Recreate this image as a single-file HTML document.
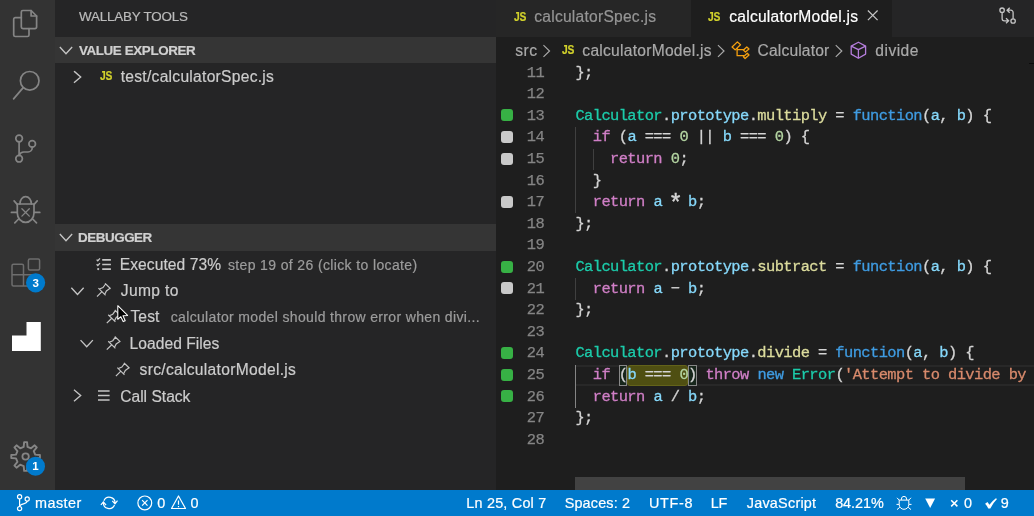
<!DOCTYPE html>
<html><head><meta charset="utf-8">
<style>
html,body{margin:0;padding:0;}
body{width:1034px;height:516px;overflow:hidden;background:#1e1e1e;position:relative;font-family:"Liberation Sans",sans-serif;color:#ccc;}
.abs{position:absolute;}
#act{left:0;top:0;width:55px;height:490px;background:#333333;}
#side{left:55px;top:0;width:441px;height:490px;background:#252526;}
#status{left:0;top:489.6px;width:1034px;height:26.4px;background:#007acc;color:#fff;}
.hdr{position:absolute;left:55px;width:441px;background:#353535;}
.t{position:absolute;white-space:nowrap;line-height:20px;height:20px;-webkit-text-stroke:0.2px currentColor;}
.ui{font-size:15.6px;color:#cccccc;}
.desc{font-size:14px;color:#9a9a9a;}
.sb{font-size:15.6px;color:#fff;}
svg{position:absolute;overflow:visible;}
.code{font-family:"Liberation Mono",monospace;font-size:15.4px;letter-spacing:-0.573px;color:#d4d4d4;white-space:pre;position:absolute;left:575.4px;-webkit-text-stroke:0.3px currentColor;height:21.6px;line-height:21.6px;}
.ln{font-family:"Liberation Mono",monospace;font-size:15.4px;letter-spacing:-0.573px;color:#858585;position:absolute;left:526.8px;-webkit-text-stroke:0.25px currentColor;height:21.6px;line-height:21.6px;}
.lna{color:#c6c6c6;}
.g{position:absolute;left:500.5px;width:12px;height:12px;border-radius:3px;}
.gg{background:#37b145;}
.gw{background:#c9c9c9;}
.k{color:#d07fc6}.b{color:#3f9ce2}.c{color:#1ccbaa}.v{color:#86d8fa}.f{color:#dcdc9d}.n{color:#b5d6a3}.s{color:#d88a6c}
.ig{position:absolute;width:1px;background:#404040;}
.bd{position:absolute;width:20px;height:20px;line-height:20px;text-align:center;color:#fff;font-weight:700;font-size:11.5px;}
.js{position:absolute;font-weight:700;font-size:12.4px;line-height:20px;height:20px;color:#d2d22c;transform:scaleX(0.83);transform-origin:0 0;letter-spacing:-0.2px;-webkit-text-stroke:0.2px currentColor;}
#root{position:absolute;left:0;top:0;width:1034px;height:516px;will-change:transform;}
.ast{display:inline-block;transform:translateY(3.4px) scale(1.55);transform-origin:50% 50%;}

</style></head><body>
<div id="root">
<div id="act" class="abs">
<svg width="55" height="490" viewBox="0 0 55 490" style="left:0;top:0" fill="none" stroke="#858585" stroke-width="1.7" stroke-linejoin="round" stroke-linecap="round">
<path d="M22.9 10.5h8.2l5.5 5.5v11a1.6 1.6 0 0 1-1.6 1.6h-12.1a1.6 1.6 0 0 1-1.6-1.6v-14.9a1.6 1.6 0 0 1 1.6-1.6z"/>
<path d="M31.1 10.5v5.5h5.5"/>
<path d="M21.3 17.7h-6a1.6 1.6 0 0 0-1.6 1.6v15.6a1.6 1.6 0 0 0 1.6 1.6h12.1a1.6 1.6 0 0 0 1.6-1.6v-6.3"/>
<circle cx="29.7" cy="80.8" r="9.3"/><path d="M23.2 87.6L13.6 98.9"/>
<circle cx="19.1" cy="138.5" r="3.3"/><circle cx="32.2" cy="143.9" r="3.3"/><circle cx="19.1" cy="158.7" r="3.3"/>
<path d="M19.1 141.8V155.4"/><path d="M32.2 147.2v0.6a4.2 4.2 0 0 1-4.2 4.2h-3.9a5 5 0 0 0-4.9 3.2"/>
<path d="M17.3 204h16.7v9a8.35 9.4 0 0 1-16.7 0z"/><path d="M19.9 204a5.75 7.3 0 0 1 11.5 0"/>
<path d="M14.1 200.9L17.4 204.6M37.2 200.9L33.9 204.6M11.4 212.4H17M39.8 212.4H34.3M14.8 222.8L18.6 219M36.5 222.8L32.7 219"/>
<path d="M21.9 208.7L29.3 216.1M29.3 208.7L21.9 216.1" stroke-width="1.3"/>
</svg>
<svg width="55" height="490" viewBox="0 0 55 490" style="left:0;top:0" fill="none" stroke="#6e6e6e" stroke-width="1.5" stroke-linejoin="round">
<path d="M13.5 264.3h8.5a1.5 1.5 0 0 1 1.5 1.5v9h9.5a1.5 1.5 0 0 1 1.5 1.5v8.2a1.5 1.5 0 0 1-1.5 1.5h-19.5a1.5 1.5 0 0 1-1.5-1.5v-18.7a1.5 1.5 0 0 1 1.5-1.5z"/>
<path d="M12 274.8h11.5v11.2"/>
<rect x="28.4" y="259" width="11.2" height="11" rx="1.5"/>
</svg>
<svg width="55" height="490" viewBox="0 0 55 490" style="left:0;top:0">
<path d="M26.5 322H40.8V351H12V335.6H26.5z" fill="#ffffff"/>
<path d="M23.69 446.89 L24.13 442.17 L27.07 442.17 L27.51 446.89 L31.04 448.35 L34.69 445.33 L36.77 447.41 L33.75 451.06 L35.21 454.59 L39.93 455.03 L39.93 457.97 L35.21 458.41 L33.75 461.94 L36.77 465.59 L34.69 467.67 L31.04 464.65 L27.51 466.11 L27.07 470.83 L24.13 470.83 L23.69 466.11 L20.16 464.65 L16.51 467.67 L14.43 465.59 L17.45 461.94 L15.99 458.41 L11.27 457.97 L11.27 455.03 L15.99 454.59 L17.45 451.06 L14.43 447.41 L16.51 445.33 L20.16 448.35Z" fill="none" stroke="#858585" stroke-width="1.9" stroke-linejoin="round"/>
<circle cx="25.6" cy="456.5" r="3.2" fill="none" stroke="#858585" stroke-width="1.8"/>
<circle cx="35.6" cy="282.8" r="9.6" fill="#007acc"/><circle cx="35.5" cy="466.3" r="9.5" fill="#007acc"/>
</svg>
<div class="bd" style="left:25.6px;top:272.8px;">3</div><div class="bd" style="left:25.5px;top:456.3px;">1</div>
</div>
<div id="side" class="abs"></div>
<div class="hdr" style="top:37.3px;height:26.2px;"></div>
<div class="hdr" style="top:224.3px;height:26.4px;"></div>
<svg width="441" height="490" viewBox="55 0 441 490" style="left:55px;top:0" fill="none" stroke="#c5c5c5" stroke-width="1.35" stroke-linecap="square">
<path d="M60.3 47.5l5.70 6.20l5.70 -6.20"/>
<path d="M60.3 234.5l5.70 6.20l5.70 -6.20"/>
<path d="M74.5 71.6l6.20 5.30l-6.20 5.30"/>
<path d="M71.8 288.2l5.70 6.20l5.70 -6.20"/>
<path d="M81.0 340.6l5.70 6.20l5.70 -6.20"/>
<path d="M74.5 390.2l6.20 5.30l-6.20 5.30"/>
<path transform="translate(93.45,279.20) scale(0.9)" stroke-width="1.3" d="M4.4 18.8L8.9 14.4M6 10.4L13 17.4M7.4 10.7L10.6 9.3L13.5 5.3M18.4 10.2L14.4 13L12.8 16.1M13.3 5.1L18.6 10.2"/>
<path transform="translate(103.25,305.80) scale(0.9)" stroke-width="1.3" d="M4.4 18.8L8.9 14.4M6 10.4L13 17.4M7.4 10.7L10.6 9.3L13.5 5.3M18.4 10.2L14.4 13L12.8 16.1M13.3 5.1L18.6 10.2"/>
<path transform="translate(103.25,332.30) scale(0.9)" stroke-width="1.3" d="M4.4 18.8L8.9 14.4M6 10.4L13 17.4M7.4 10.7L10.6 9.3L13.5 5.3M18.4 10.2L14.4 13L12.8 16.1M13.3 5.1L18.6 10.2"/>
<path transform="translate(112.35,358.70) scale(0.9)" stroke-width="1.3" d="M4.4 18.8L8.9 14.4M6 10.4L13 17.4M7.4 10.7L10.6 9.3L13.5 5.3M18.4 10.2L14.4 13L12.8 16.1M13.3 5.1L18.6 10.2"/>
<path d="M98 391H109.6M98 395.5H109.6M98 400H109.6" stroke-width="1.3" stroke-linecap="butt"/>
<path d="M102.2 259.8H110.9M102.2 264.5H110.9M102.2 269.1H110.9" stroke-width="1.7" stroke-linecap="butt"/>
<path d="M96.6 259.6l1.2 1.2l2.2-2.4M96.6 264.3l1.2 1.2l2.2-2.4" stroke-width="1.3" stroke-linecap="butt"/>
<circle cx="98.2" cy="269.1" r="1.1" fill="#c5c5c5" stroke="none"/>
</svg>
<div class="js" style="left:99.7px;top:65.7px;">JS</div>
<div class="t" style="left:78.94px;top:7.26px;font-size:13.4px;color:#bbbbbb;letter-spacing:-0.182px;">WALLABY TOOLS</div>
<div class="t" style="left:78.91px;top:41.26px;font-size:13.4px;color:#d0d0d0;font-weight:700;letter-spacing:-0.378px;">VALUE EXPLORER</div>
<div class="t" style="left:78.10px;top:228.36px;font-size:13.4px;color:#d0d0d0;font-weight:700;letter-spacing:-0.460px;">DEBUGGER</div>
<div class="t" style="left:120.76px;top:67.19px;font-size:15.6px;color:#cccccc;letter-spacing:0.274px;">test/calculatorSpec.js</div>
<div class="t" style="left:119.72px;top:255.19px;font-size:15.6px;color:#cccccc;letter-spacing:0.079px;">Executed 73%</div>
<div class="t" style="left:227.91px;top:254.95px;font-size:14px;color:#9c9c9c;letter-spacing:0.368px;">step 19 of 26 (click to locate)</div>
<div class="t" style="left:120.76px;top:281.09px;font-size:15.6px;color:#cccccc;letter-spacing:0.352px;">Jump to</div>
<div class="t" style="left:130.45px;top:306.99px;font-size:15.6px;color:#cccccc;letter-spacing:0.118px;">Test</div>
<div class="t" style="left:170.71px;top:306.65px;font-size:14px;color:#9c9c9c;letter-spacing:0.347px;">calculator model should throw error when divi...</div>
<div class="t" style="left:129.52px;top:333.69px;font-size:15.6px;color:#cccccc;letter-spacing:0.050px;">Loaded Files</div>
<div class="t" style="left:139.57px;top:359.99px;font-size:15.6px;color:#cccccc;letter-spacing:0.303px;">src/calculatorModel.js</div>
<div class="t" style="left:120.21px;top:386.69px;font-size:15.6px;color:#cccccc;">Call Stack</div>
<svg width="30" height="30" viewBox="108 298 30 30" style="left:108px;top:298px"><path d="M117.8 305.7V319.3L120.8 316.7L123.2 321.6L125.2 320.7L123 315.7L127.6 315.4Z" fill="#000" stroke="#fff" stroke-width="1.05" stroke-linejoin="round"/></svg>
<div id="editor">
<div class="abs" style="left:496px;top:0;width:538px;height:37px;background:#252526;"></div>
<div class="abs" style="left:496px;top:0;width:195.3px;height:37px;background:#262626;"></div>
<div class="abs" style="left:691.3px;top:0;width:200.3px;height:37px;background:#1e1e1e;"></div>
<div class="js" style="left:513.5px;top:7.0px;">JS</div>
<div class="js" style="left:708.0px;top:7.0px;">JS</div>
<div class="js" style="left:561.7px;top:40.0px;">JS</div>
<div class="t" style="left:534.24px;top:6.89px;font-size:15.6px;color:#959595;letter-spacing:0.241px;">calculatorSpec.js</div>
<div class="t" style="left:729.24px;top:6.89px;font-size:15.6px;color:#ffffff;letter-spacing:0.236px;">calculatorModel.js</div>
<div class="t" style="left:515.17px;top:40.99px;font-size:15.6px;color:#a9a9a9;letter-spacing:0.524px;">src</div>
<div class="t" style="left:582.34px;top:40.99px;font-size:15.6px;color:#a9a9a9;letter-spacing:0.260px;">calculatorModel.js</div>
<div class="t" style="left:757.51px;top:40.99px;font-size:15.6px;color:#a9a9a9;letter-spacing:0.172px;">Calculator</div>
<div class="t" style="left:875.34px;top:40.99px;font-size:15.6px;color:#a9a9a9;letter-spacing:0.460px;">divide</div>
<svg width="538" height="64" viewBox="496 0 538 64" style="left:496px;top:0" fill="none" stroke="#c5c5c5" stroke-width="1.2">
<path d="M867.9 10.5L877.6 20.2M877.6 10.5L867.9 20.2"/>
<path d="M543.9 45.6l5.6 5.4l-5.6 5.4" stroke="#a9a9a9" stroke-linecap="square"/>
<path d="M718.4 45.6l5.6 5.4l-5.6 5.4" stroke="#a9a9a9" stroke-linecap="square"/>
<path d="M836.2 45.6l5.6 5.4l-5.6 5.4" stroke="#a9a9a9" stroke-linecap="square"/>
<g stroke="#c5c5c5" stroke-width="1.3"><circle cx="1002.1" cy="10.2" r="2.2"/><circle cx="1013.1" cy="21" r="2.2"/><path d="M1002.1 12.5V18.6a2.2 2.2 0 0 0 2.2 2.2h4M1006 18.3l2.6 2.5l-2.6 2.5M1013.1 18.7V12.4a2.2 2.2 0 0 0-2.2-2.2h-3.6M1009.7 7.7l-2.6 2.5l2.6 2.5"/></g>
<g stroke="#f5a00f" stroke-width="1.3" stroke-linejoin="round"><path d="M737.4 41.9L740.5 44.8L735.2 49.9L732.1 47z"/><path d="M737.1 47.9V55.7H744M737.1 49.7H744.4"/><path d="M746.8 47L749 48.9L745.4 52L743.4 50.1zM747.3 53.3L749 55L745.1 58.6L743.4 56.7z"/></g>
<g stroke="#b57edc" stroke-width="1.3" stroke-linejoin="round"><path d="M858.4 42.2L865.6 46.1V54.1L858.4 58.2L851.2 54.1V46.1z"/><path d="M851.2 46.1L858.4 49.6L865.6 46.1M858.4 49.6V58.2"/></g>
</svg>

<div class="abs" style="left:575px;top:365.0px;width:459px;height:20.8px;box-sizing:border-box;border-top:2px solid #282828;border-bottom:2px solid #282828;"></div>
<div class="abs" style="left:626.7px;top:365.2px;width:61.3px;height:20.6px;box-sizing:border-box;background:#4f4f12;border:1px solid #63631a;border-radius:3px;"></div>
<div class="abs" style="left:618.6px;top:365.2px;width:8.1px;height:20.6px;box-sizing:border-box;background:#17261b;border:1px solid #888;"></div>
<div class="abs" style="left:688.2px;top:365.2px;width:8.8px;height:20.6px;box-sizing:border-box;background:#17261b;border:1px solid #888;"></div>
<div class="ig" style="left:575.2px;top:127.0px;height:86.4px;background:#404040;"></div>
<div class="ig" style="left:592.5px;top:148.6px;height:21.6px;background:#404040;"></div>
<div class="ig" style="left:575.2px;top:278.2px;height:21.6px;background:#404040;"></div>
<div class="ig" style="left:575.2px;top:364.6px;height:43.2px;background:#858585;"></div>
<div class="ln" style="top:62.5px">11</div>
<div class="code" style="top:62.5px">};</div>
<div class="ln" style="top:84.1px">12</div>
<div class="ln" style="top:105.7px">13</div>
<div class="g gg" style="top:109.4px"></div>
<div class="code" style="top:105.7px"><span class="c">Calculator</span>.<span class="v">prototype</span>.<span class="f">multiply</span> = <span class="b">function</span>(<span class="v">a</span>, <span class="v">b</span>) {</div>
<div class="ln" style="top:127.3px">14</div>
<div class="g gw" style="top:131.0px"></div>
<div class="code" style="top:127.3px">  <span class="k">if</span> (<span class="v">a</span> === <span class="n">0</span> || <span class="v">b</span> === <span class="n">0</span>) {</div>
<div class="ln" style="top:148.9px">15</div>
<div class="g gw" style="top:152.6px"></div>
<div class="code" style="top:148.9px">    <span class="k">return</span> <span class="n">0</span>;</div>
<div class="ln" style="top:170.5px">16</div>
<div class="code" style="top:170.5px">  }</div>
<div class="ln" style="top:192.1px">17</div>
<div class="g gw" style="top:195.8px"></div>
<div class="code" style="top:192.1px">  <span class="k">return</span> <span class="v">a</span> <span class="ast">*</span> <span class="v">b</span>;</div>
<div class="ln" style="top:213.7px">18</div>
<div class="code" style="top:213.7px">};</div>
<div class="ln" style="top:235.3px">19</div>
<div class="ln" style="top:256.9px">20</div>
<div class="g gg" style="top:260.6px"></div>
<div class="code" style="top:256.9px"><span class="c">Calculator</span>.<span class="v">prototype</span>.<span class="f">subtract</span> = <span class="b">function</span>(<span class="v">a</span>, <span class="v">b</span>) {</div>
<div class="ln" style="top:278.5px">21</div>
<div class="g gw" style="top:282.2px"></div>
<div class="code" style="top:278.5px">  <span class="k">return</span> <span class="v">a</span> &#8722; <span class="v">b</span>;</div>
<div class="ln" style="top:300.1px">22</div>
<div class="code" style="top:300.1px">};</div>
<div class="ln" style="top:321.7px">23</div>
<div class="ln" style="top:343.3px">24</div>
<div class="g gg" style="top:347.0px"></div>
<div class="code" style="top:343.3px"><span class="c">Calculator</span>.<span class="v">prototype</span>.<span class="f">divide</span> = <span class="b">function</span>(<span class="v">a</span>, <span class="v">b</span>) {</div>
<div class="ln" style="top:364.9px">25</div>
<div class="g gg" style="top:368.6px"></div>
<div class="code" style="top:364.9px">  <span class="k">if</span> (<span class="v">b</span> === <span class="n">0</span>) <span class="k">throw</span> <span class="b">new</span> <span class="c">Error</span>(<span class="s">'Attempt to divide by</span></div>
<div class="ln" style="top:386.5px">26</div>
<div class="g gg" style="top:390.2px"></div>
<div class="code" style="top:386.5px">  <span class="k">return</span> <span class="v">a</span> / <span class="v">b</span>;</div>
<div class="ln" style="top:408.1px">27</div>
<div class="code" style="top:408.1px">};</div>
<div class="ln" style="top:429.7px">28</div>
<div class="abs" style="left:1029px;top:62.6px;width:5px;height:1.6px;background:#0c0c0c;"></div>
<div class="abs" style="left:575px;top:477px;width:390px;height:12.6px;background:#424242;"></div>
</div>
<div id="status" class="abs"></div>
<div class="t" style="left:35.04px;top:492.91px;font-size:14.4px;color:#ffffff;letter-spacing:0.442px;">master</div>
<div class="t" style="left:157.34px;top:492.91px;font-size:14.4px;color:#ffffff;">0</div>
<div class="t" style="left:190.44px;top:492.91px;font-size:14.4px;color:#ffffff;">0</div>
<div class="t" style="left:466.32px;top:492.91px;font-size:14.4px;color:#ffffff;letter-spacing:0.209px;">Ln 25, Col 7</div>
<div class="t" style="left:564.65px;top:492.91px;font-size:14.4px;color:#ffffff;letter-spacing:0.185px;">Spaces: 2</div>
<div class="t" style="left:648.89px;top:492.91px;font-size:14.4px;color:#ffffff;letter-spacing:0.739px;">UTF-8</div>
<div class="t" style="left:710.82px;top:492.91px;font-size:14.4px;color:#ffffff;letter-spacing:-0.239px;">LF</div>
<div class="t" style="left:746.77px;top:492.91px;font-size:14.4px;color:#ffffff;letter-spacing:0.238px;">JavaScript</div>
<div class="t" style="left:835.17px;top:492.91px;font-size:14.4px;color:#ffffff;letter-spacing:-0.055px;">84.21%</div>
<div class="t" style="left:963.94px;top:492.91px;font-size:14.4px;color:#ffffff;">0</div>
<div class="t" style="left:1000.83px;top:492.91px;font-size:14.4px;color:#ffffff;">9</div>
<svg width="1034" height="27" viewBox="0 489.6 1034 27" style="left:0;top:489.6px" fill="none" stroke="#fff" stroke-width="1.2">
<circle cx="19.6" cy="496.4" r="2.1"/><circle cx="27.2" cy="498.6" r="2.1"/><circle cx="19.6" cy="508.2" r="2.1"/><path d="M19.6 498.5V506.1M27.2 500.7C27.2 504.5 20.3 502.5 19.8 506"/>
<path d="M103.9 500.3A5.8 5.8 0 0 1 115 502.9M112.3 500.5L115 503.5L117.5 500.3M114.5 504.7A5.8 5.8 0 0 1 103.4 502.1M100.9 504.5L103.4 501.5L106.1 504.7"/>
<circle cx="144.8" cy="502.5" r="6.9"/><path d="M142.1 499.8l5.4 5.4M147.5 499.8l-5.4 5.4"/>
<path d="M178.5 495.6l7 12.5h-14z" stroke-linejoin="round"/><path d="M178.5 500v4.4M178.5 505.6v1.3"/>
<g stroke-width="1"><path d="M899.2 499.7h9.6v4.4a4.8 4.8 0 0 1-9.6 0z" stroke-linejoin="round"/><path d="M901.2 499.6a2.8 3.7 0 0 1 5.6 0M897 497.4l2.3 2.4M911 497.4l-2.3 2.4M896.5 504h2.7M911.5 504h-2.7M897 509.2l2.8-2.3M911 509.2l-2.8-2.3"/></g>
<path d="M925.2 498.2h9.9l-4.95 9.5z" fill="#fff" stroke="none"/>
<path d="M951.2 499.8l6.2 6.2M957.4 499.8l-6.2 6.2" stroke-width="1.5"/>
<path d="M985.1 503.3L987.5 501.5L989.4 504.3Q992.4 500.4 995.9 497.8L997 498.7Q992.8 503 990.3 508H988.3Q987 505.3 985.1 503.3z" fill="#fff" stroke="none"/>
</svg>
</div>
</body></html>
